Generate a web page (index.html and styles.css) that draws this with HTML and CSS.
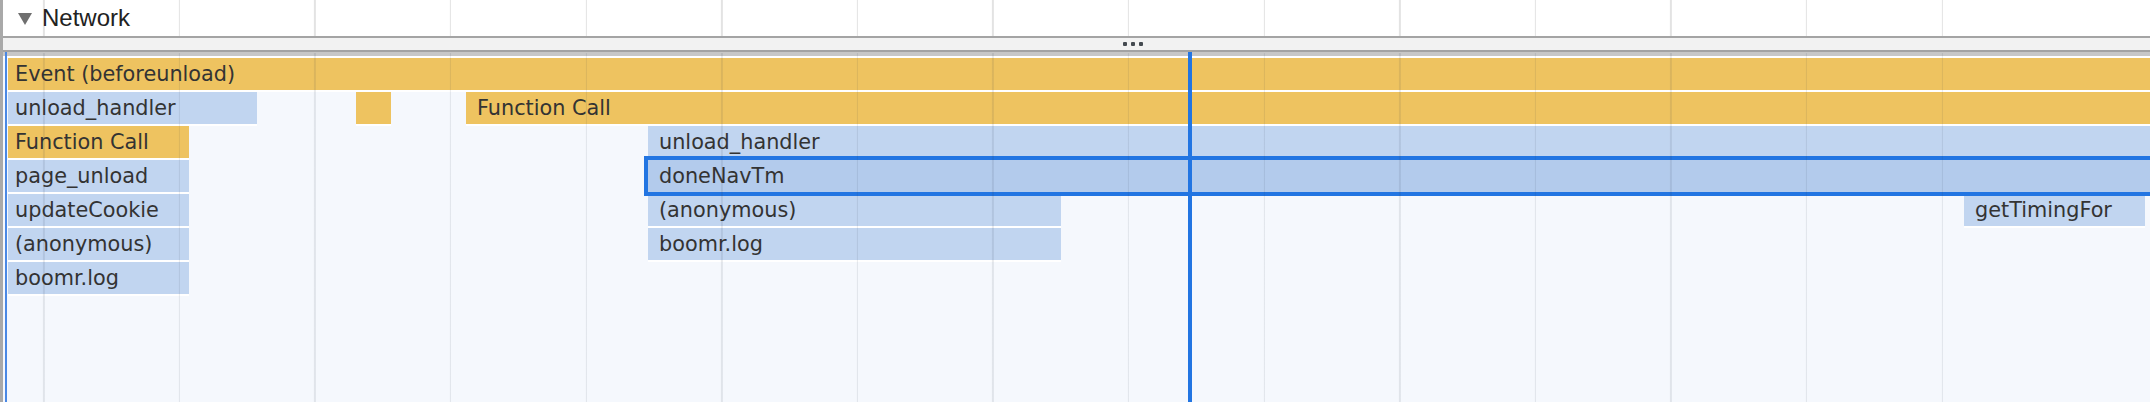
FILE: index.html
```html
<!DOCTYPE html>
<html>
<head>
<meta charset="utf-8">
<link rel="stylesheet" href="styles.css">
</head>
<body>
<div class="panel">
  <div class="edge"></div>
  <div class="main">
    <div class="header">
      <span class="tri"></span>
      <span class="title">Network</span>
    </div>
    <div class="divider">
      <span class="dot"></span><span class="dot"></span><span class="dot"></span>
    </div>
    <div class="flame">
      <div class="row">
        <div class="bar orange first" style="left:0;width:2142px">Event (beforeunload)</div>
      </div>
      <div class="row">
        <div class="bar blue first" style="left:0;width:249px">unload_handler</div>
        <div class="bar orange" style="left:348px;width:35px"></div>
        <div class="bar orange" style="left:458px;width:1700px">Function Call</div>
      </div>
      <div class="row">
        <div class="bar orange first" style="left:0;width:181px">Function Call</div>
        <div class="bar blue" style="left:640px;width:1510px">unload_handler</div>
      </div>
      <div class="row">
        <div class="bar blue first" style="left:0;width:181px">page_unload</div>
        <div class="bar blue selected" style="left:640px;width:1520px">doneNavTm</div>
      </div>
      <div class="row">
        <div class="bar blue first" style="left:0;width:181px">updateCookie</div>
        <div class="bar blue" style="left:640px;width:413px">(anonymous)</div>
        <div class="bar blue" style="left:1956px;width:181px">getTimingFor</div>
      </div>
      <div class="row">
        <div class="bar blue first" style="left:0;width:181px">(anonymous)</div>
        <div class="bar blue" style="left:640px;width:413px">boomr.log</div>
      </div>
      <div class="row">
        <div class="bar blue first" style="left:0;width:181px">boomr.log</div>
      </div>
      <div class="cursor" style="left:1185px"></div>
    </div>
  </div>
</div>
</body>
</html>
```

FILE: styles.css
```css
html, body {
  margin: 0;
  padding: 0;
  width: 2150px;
  height: 402px;
  overflow: hidden;
  background: #f5f8fd;
}

.panel {
  display: flex;
  width: 2150px;
  height: 402px;
}

.edge {
  width: 3px;
  flex: none;
  background: #a9a9a9;
}

.main {
  flex: 1;
  display: flex;
  flex-direction: column;
  min-width: 0;
}

.header {
  height: 36px;
  flex: none;
  display: flex;
  align-items: center;
  gap: 10px;
  padding-left: 15px;
  border-bottom: 2px solid #a4a4a4;
  background-color: #ffffff;
  background-image: repeating-linear-gradient(90deg,
    transparent 0, transparent 134.1px,
    #e3e3e3 134.1px, #e3e3e3 135.6px);
  background-position: -94.1px 0;
}

.tri {
  width: 0;
  height: 0;
  border-left: 7.5px solid transparent;
  border-right: 7.5px solid transparent;
  border-top: 12.5px solid #6f6f6f;
  margin-top: 1px;
}

.title {
  font-family: "Liberation Sans", Arial, sans-serif;
  font-size: 24px;
  color: #222;
}

.divider {
  height: 12px;
  flex: none;
  display: flex;
  align-items: center;
  gap: 4px;
  padding-left: 1120px;
  background: #f2f2f2;
  border-bottom: 2px solid #a3a3a3;
}

.dot {
  width: 4px;
  height: 4px;
  background: #444a50;
  border-radius: 1px;
}

.flame {
  position: relative;
  flex: 1;
  border-top: 4px solid #c7c7c7;
  padding-top: 2px;
  padding-left: 5px;
  background: #f5f8fd;
  box-shadow: inset 0 2px 0 #ffffff;
}

.flame::before {
  content: "";
  position: absolute;
  left: 2px;
  width: 2px;
  top: -4px;
  bottom: 0;
  background: #4a88e4;
  z-index: 3;
}

.flame::after {
  content: "";
  position: absolute;
  left: 0;
  right: 0;
  top: -3px;
  bottom: 0;
  pointer-events: none;
  z-index: 4;
  background-image: repeating-linear-gradient(90deg,
    transparent 0, transparent 134.1px,
    rgba(40, 50, 70, 0.1) 134.1px, rgba(40, 50, 70, 0.1) 135.6px);
  background-position: -94.1px 0;
}

.row {
  position: relative;
  height: 32px;
  margin-bottom: 2px;
}

.bar {
  position: absolute;
  top: 0;
  height: 32px;
  box-sizing: border-box;
  display: flex;
  align-items: center;
  padding-left: 11px;
  white-space: nowrap;
  overflow: hidden;
  font-family: "DejaVu Sans", "Lucida Grande", sans-serif;
  font-size: 20.8px;
  color: #333333;
  box-shadow: 0 2px 0 #ffffff;
}

.bar.first {
  padding-left: 7px;
}

.orange {
  background: #eec360;
}

.blue {
  background: #c1d5f0;
}

.blue.selected {
  background: #b3cbec;
  outline: 4px solid #2275e2;
  overflow: visible;
  z-index: 2;
  box-shadow: none;
}

.cursor {
  position: absolute;
  top: -4px;
  bottom: 0;
  width: 4px;
  background: #2275e2;
  z-index: 5;
}
```
